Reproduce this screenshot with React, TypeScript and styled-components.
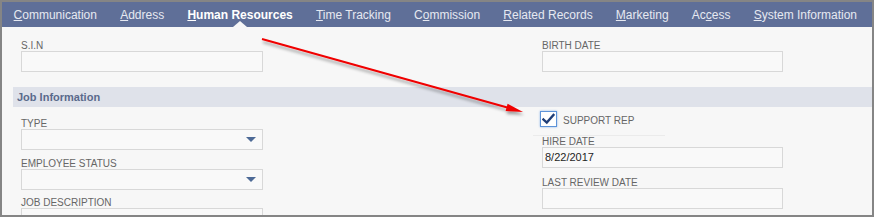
import React from "react";
import styled, { createGlobalStyle } from "styled-components";

const Global = createGlobalStyle`
  html, body { margin: 0; padding: 0; background: #ffffff; }
  * { box-sizing: border-box; }
`;

const Frame = styled.div`
  position: relative;
  width: 874px;
  height: 217px;
  border: 2px solid #858585;
  background: #f7f7f7;
  overflow: hidden;
  font-family: "Liberation Sans", Arial, sans-serif;
`;

const Nav = styled.div`
  display: flex;
  align-items: stretch;
  height: 25px;
  background: #5f6f98;
  padding-left: 0;
`;

const Tab = styled.div<{ $active?: boolean }>`
  position: relative;
  display: flex;
  align-items: center;
  padding: 0 11.6px;
  font-size: 12px;
  white-space: nowrap;
  color: ${(p) => (p.$active ? "#ffffff" : "#e6e9f1")};
  font-weight: ${(p) => (p.$active ? 700 : 400)};
  u { text-decoration: underline; text-underline-offset: 1px; }
  ${(p) =>
    p.$active
      ? `&::after {
    content: "";
    position: absolute;
    left: 50%;
    bottom: 0;
    margin-left: -7px;
    border-left: 7px solid transparent;
    border-right: 7px solid transparent;
    border-bottom: 6px solid #f7f7f7;
  }`
      : ""}
`;

const Content = styled.div`
  padding: 13px 0 0 11px;
`;

const Row = styled.div`
  display: flex;
  align-items: flex-start;
`;

const Column = styled.div<{ $w?: number }>`
  display: flex;
  flex-direction: column;
  width: ${(p) => (p.$w ? `${p.$w}px` : "auto")};
  padding-left: 8px;
`;

const Field = styled.div<{ $gap?: number }>`
  display: flex;
  flex-direction: column;
  margin-top: ${(p) => p.$gap ?? 0}px;
`;

const Label = styled.div`
  font-size: 10px;
  line-height: 11px;
  height: 11px;
  color: #666666;
  text-transform: uppercase;
  white-space: nowrap;
`;

const Box = styled.div<{ $w: number }>`
  position: relative;
  width: ${(p) => p.$w}px;
  height: 21px;
  border: 1px solid #d8d8d8;
  background: #f9f9f9;
  font-size: 11px;
  line-height: 19px;
  padding-left: 2px;
  color: #1e1e1e;
`;

const Caret = styled.span`
  position: absolute;
  right: 6px;
  top: 7px;
  width: 0;
  height: 0;
  border-left: 5px solid transparent;
  border-right: 5px solid transparent;
  border-top: 5px solid #4d6a96;
`;

const Band = styled.div`
  margin-top: 15px;
  height: 20px;
  background: #dfe2ea;
  display: flex;
  align-items: center;
  padding-left: 4px;
  font-size: 11px;
  font-weight: 700;
  color: #5a6a8c;
`;

const CheckRow = styled.div`
  display: flex;
  align-items: flex-end;
  width: 132px;
  margin-left: -9px;
  padding: 4px 0 8px 7px;
  border-bottom: 1px solid #ebebeb;
  gap: 6px;
`;

const CheckBox = styled.span`
  width: 17px;
  height: 16px;
  border: 1px solid #5d93d9;
  box-shadow: 0 0 2px #8fb6ea;
  background: #ffffff;
  display: flex;
  align-items: center;
  justify-content: center;
`;

const CheckLabel = styled.span`
  font-size: 10px;
  line-height: 10px;
  color: #666666;
  white-space: nowrap;
  padding-bottom: 1px;
`;

const Overlay = styled.svg`
  position: absolute;
  left: -2px;
  top: -2px;
  pointer-events: none;
`;

const tabs: { pre: string; key: string; post: string; active?: boolean }[] = [
  { pre: "", key: "C", post: "ommunication" },
  { pre: "", key: "A", post: "ddress" },
  { pre: "", key: "H", post: "uman Resources", active: true },
  { pre: "", key: "T", post: "ime Tracking" },
  { pre: "C", key: "o", post: "mmission" },
  { pre: "", key: "R", post: "elated Records" },
  { pre: "", key: "M", post: "arketing" },
  { pre: "Ac", key: "c", post: "ess" },
  { pre: "", key: "S", post: "ystem Information" },
];

export default function App() {
  return (
    <>
      <Global />
      <Frame>
        <Nav>
          {tabs.map((t) => (
            <Tab key={t.pre + t.key + t.post} $active={t.active}>
              <span>
                {t.pre}
                <u>{t.key}</u>
                {t.post}
              </span>
            </Tab>
          ))}
        </Nav>
        <Content>
          <Row>
            <Column $w={521}>
              <Field>
                <Label>S.I.N</Label>
                <Box $w={242} />
              </Field>
            </Column>
            <Column>
              <Field>
                <Label>Birth Date</Label>
                <Box $w={241} />
              </Field>
            </Column>
          </Row>
          <Band>Job Information</Band>
          <Row>
            <Column $w={521}>
              <Field $gap={11}>
                <Label>Type</Label>
                <Box $w={242}>
                  <Caret />
                </Box>
              </Field>
              <Field $gap={8}>
                <Label>Employee Status</Label>
                <Box $w={242}>
                  <Caret />
                </Box>
              </Field>
              <Field $gap={7}>
                <Label>Job Description</Label>
                <Box $w={242} />
              </Field>
            </Column>
            <Column>
              <CheckRow>
                <CheckBox>
                  <svg width="13" height="12" viewBox="0 0 13 12">
                    <path
                      d="M1.5 6.5 L4.8 9.6 L11.5 2"
                      fill="none"
                      stroke="#1f3e78"
                      strokeWidth="2.4"
                      strokeLinecap="square"
                    />
                  </svg>
                </CheckBox>
                <CheckLabel>SUPPORT REP</CheckLabel>
              </CheckRow>
              <Field>
                <Label>Hire Date</Label>
                <Box $w={241}>8/22/2017</Box>
              </Field>
              <Field $gap={9}>
                <Label>Last Review Date</Label>
                <Box $w={241} />
              </Field>
            </Column>
          </Row>
        </Content>
        <Overlay width="874" height="217" viewBox="0 0 874 217">
          <defs>
            <filter id="shadow" x="-10%" y="-50%" width="120%" height="200%">
              <feDropShadow dx="1" dy="3" stdDeviation="1.8" floodColor="#000" floodOpacity="0.35" />
            </filter>
          </defs>
          <g filter="url(#shadow)">
            <line x1="262" y1="39" x2="510" y2="108.3" stroke="#f00000" strokeWidth="2" />
            <polygon points="523,112 505.6,111 507.6,103.8" fill="#f00000" />
          </g>
        </Overlay>
      </Frame>
    </>
  );
}
